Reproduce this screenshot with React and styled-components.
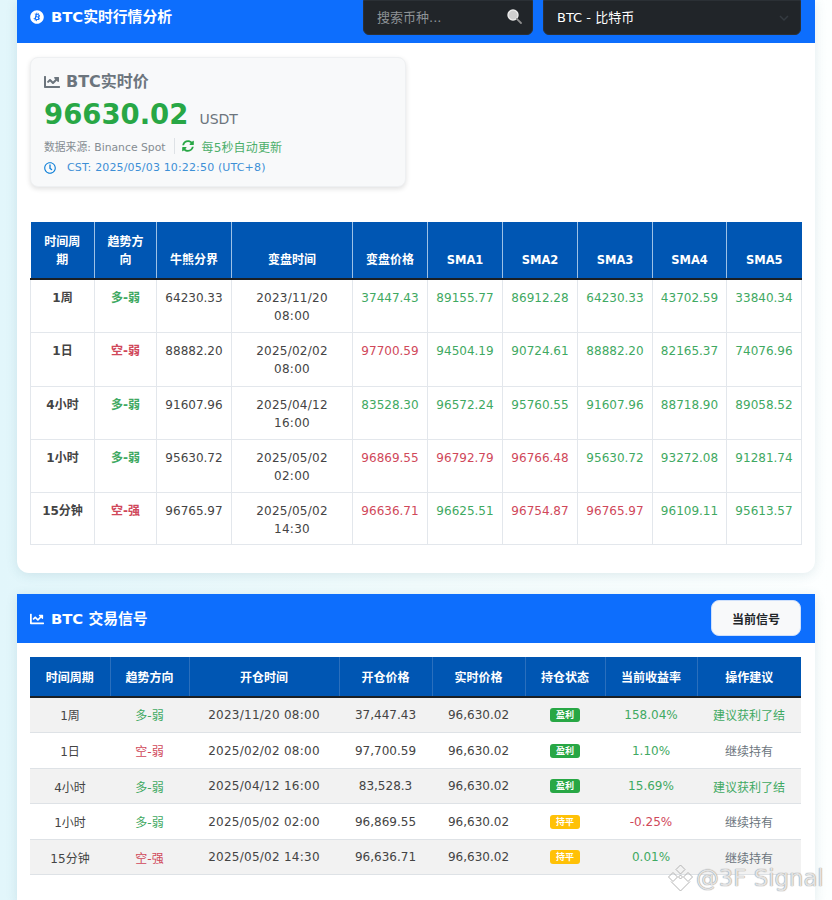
import styled, { createGlobalStyle } from 'styled-components';
import { FaBitcoin, FaChartLine, FaSyncAlt, FaRegClock } from 'react-icons/fa';

const GlobalStyle = createGlobalStyle`
  html, body {
    margin: 0;
    height: 900px;
    overflow: hidden;
    background: linear-gradient(90deg, #e2f6fb 0%, #f1fbfc 50%, #fdffff 100%);
    font-family: "DejaVu Sans", "Noto Sans CJK SC", sans-serif;
    color: #333;
  }
  * { box-sizing: border-box; }
`;

const Page = styled.div`
  position: relative;
  height: 900px;
  overflow: hidden;
  padding: 0 17px;
  display: flex;
  flex-direction: column;
  gap: 21px;
`;

const Card = styled.section`
  background: #fff;
  border-radius: ${p => (p.$open ? '2px 2px 0 0' : '0 0 12px 12px')};
  box-shadow: 0 2px 12px rgba(60, 110, 130, 0.14);
  flex-shrink: 0;
`;

const Header = styled.header`
  background: #0d6efd;
  height: ${p => p.$h}px;
  padding: 0 14px 0 13px;
  display: flex;
  align-items: ${p => (p.$top ? 'flex-start' : 'center')};
  justify-content: space-between;
`;

const Title = styled.h2`
  margin: 0;
  padding-top: ${p => (p.$nudge ? 1 : 0)}px;
  color: #fff;
  font-size: 14.8px;
  font-weight: 700;
  display: flex;
  align-items: center;
  gap: 7px;
  line-height: 34px;
  svg { font-size: 14px; }
`;

const Controls = styled.div`
  display: flex;
  gap: 10px;
`;

const SearchBox = styled.div`
  position: relative;
  width: 170px;
  height: 35px;
`;

const SearchInput = styled.input`
  width: 100%;
  height: 100%;
  border: 1px solid #2b3035;
  border-radius: 0 0 6px 6px;
  background: #212529;
  color: #fff;
  padding: 0 13px;
  font: 13px "DejaVu Sans", "Noto Sans CJK SC", sans-serif;
  &::placeholder { color: #8d9296; opacity: 1; }
`;

const SearchGlyph = styled.svg`
  position: absolute;
  right: 10px;
  top: 8px;
  width: 17px;
  height: 17px;
`;

const SelectBox = styled.div`
  position: relative;
  width: 258px;
  height: 35px;
`;

const CoinSelect = styled.select`
  width: 100%;
  height: 100%;
  appearance: none;
  border: 1px solid #2b3035;
  border-radius: 0 0 6px 6px;
  background: #212529;
  color: #fff;
  padding: 0 13px;
  font: 13px "DejaVu Sans", "Noto Sans CJK SC", sans-serif;
`;

const Chevron = styled.svg`
  position: absolute;
  right: 12px;
  top: 14px;
  width: 10px;
  height: 8px;
`;

const Body = styled.div`
  padding: 14px 13px 28px;
`;

const PriceCard = styled.div`
  width: 376px;
  height: 130px;
  margin-bottom: 35px;
  padding: 14px 13px 0;
  background: #f8f9fa;
  border: 1px solid #eef0f2;
  border-radius: 8px;
  box-shadow: 0 2px 5px rgba(0, 0, 0, 0.12);
`;

const PriceLabel = styled.div`
  display: flex;
  align-items: center;
  gap: 6px;
  color: #6c757d;
  font-size: 16px;
  font-weight: 700;
  line-height: 20px;
`;

const PriceRow = styled.div`
  display: flex;
  align-items: baseline;
  gap: 11px;
  margin-top: 4px;
  line-height: 36px;
`;

const PriceValue = styled.span`
  color: #28a745;
  font-size: 27.5px;
  font-weight: 700;
`;

const PriceUnit = styled.span`
  color: #6c757d;
  font-size: 14px;
`;

const MetaRow = styled.div`
  display: flex;
  align-items: center;
  height: 18px;
  font-size: 10.8px;
  color: #858c92;
`;

const AutoUpdate = styled.span`
  display: flex;
  align-items: center;
  gap: 8px;
  margin-left: 8px;
  padding-left: 7px;
  border-left: 1px solid #dee2e6;
  height: 16px;
  font-size: 12px;
  letter-spacing: 0.15px;
  color: #4caf6a;
  svg { color: #28a745; font-size: 12px; }
`;

const ClockRow = styled.div`
  display: flex;
  align-items: center;
  gap: 11px;
  margin-top: 5px;
  font-size: 11px;
  letter-spacing: 0.15px;
  line-height: 16px;
  color: #3d8fd6;
  svg { color: #0d7fd8; font-size: 12px; }
`;

const Table = styled.table`
  width: 771px;
  border-collapse: collapse;
  table-layout: fixed;
  font-size: 12px;
`;

const Col = styled.col`
  width: ${p => p.$w}px;
`;

const TrendHead = styled.th`
  background: #0056b3;
  color: #fff;
  height: 57px;
  padding: 0 8px 9px;
  font-size: ${p => (p.$latin ? 11.5 : 12)}px;
  line-height: 18px;
  font-weight: 700;
  vertical-align: bottom;
  text-align: center;
  border-left: 1px solid #9dc1e6;
  border-bottom: 2px solid #1a1f24;
  &:first-child { border-left: 0; }
  &:last-child { border-right: 0; }
`;

const TrendCell = styled.td`
  height: ${p => p.$h}px;
  padding: 9px 4px 0;
  line-height: 18px;
  vertical-align: top;
  text-align: center;
  border: 1px solid #e3e7ec;
  color: ${p => (p.$tone === 'up' ? '#3fa962' : p.$tone === 'down' ? '#d0485a' : '#444')};
  font-weight: ${p => (p.$strong ? 700 : 400)};
  letter-spacing: ${p => (p.$date ? '0.25px' : '0')};
`;

const SignalHead = styled.th`
  background: #0056b3;
  color: #fff;
  height: 40px;
  padding: 0;
  font-size: 12px;
  font-weight: 700;
  text-align: center;
  border-left: 1px solid #2a6fbd;
  border-bottom: 2px solid #1a1f24;
  &:first-child { border-left: 0; }
`;

const SignalRow = styled.tr`
  background: ${p => (p.$odd ? '#f2f2f2' : '#fff')};
`;

const SignalCell = styled.td`
  height: ${p => p.$h}px;
  padding: 0;
  text-align: center;
  border-bottom: 1px solid #dee2e6;
  color: ${p => (p.$tone === 'up' ? '#3fa962' : p.$tone === 'down' ? '#d0485a' : p.$tone === 'muted' ? '#6c757d' : '#444')};
  letter-spacing: ${p => (p.$date ? '0.25px' : '0')};
`;

const Badge = styled.span`
  display: inline-block;
  width: 30px;
  height: 14px;
  line-height: 14px;
  border-radius: 3px;
  vertical-align: middle;
  color: #fff;
  font-size: 9px;
  font-weight: 700;
  background: ${p => (p.$flat ? '#ffc107' : '#28a745')};
`;

const SignalButton = styled.button`
  width: 90px;
  height: 36px;
  border: 1px solid #cfe0fb;
  border-radius: 8px;
  background: #f8f9fa;
  color: #212529;
  font: 700 12px "DejaVu Sans", "Noto Sans CJK SC", sans-serif;
`;

const Watermark = styled.div`
  position: absolute;
  left: 667px;
  top: 864px;
  display: flex;
  align-items: center;
  gap: 2px;
  font-size: 22.8px;
  line-height: 28px;
  white-space: nowrap;
  color: rgba(255, 255, 255, 0.75);
  text-shadow: 0 0 1px #8c8c8c, 0 0 1px #a0a0a0;
`;

const trendRows = [
  ['1周', '多-弱', 'up', '64230.33', '2023/11/20', '08:00', ['37447.43', 'up'], '89155.77 up', '86912.28 up', '64230.33 up', '43702.59 up', '33840.34 up'],
  ['1日', '空-弱', 'down', '88882.20', '2025/02/02', '08:00', ['97700.59', 'down'], '94504.19 up', '90724.61 up', '88882.20 up', '82165.37 up', '74076.96 up'],
  ['4小时', '多-弱', 'up', '91607.96', '2025/04/12', '16:00', ['83528.30', 'up'], '96572.24 up', '95760.55 up', '91607.96 up', '88718.90 up', '89058.52 up'],
  ['1小时', '多-弱', 'up', '95630.72', '2025/05/02', '02:00', ['96869.55', 'down'], '96792.79 down', '96766.48 down', '95630.72 up', '93272.08 up', '91281.74 up'],
  ['15分钟', '空-强', 'down', '96765.97', '2025/05/02', '14:30', ['96636.71', 'down'], '96625.51 up', '96754.87 down', '96765.97 down', '96109.11 up', '95613.57 up'],
];

const signalRows = [
  ['1周', '多-弱', 'up', '2023/11/20 08:00', '37,447.43', '盈利', '158.04%', 'up', '建议获利了结', 'up'],
  ['1日', '空-弱', 'down', '2025/02/02 08:00', '97,700.59', '盈利', '1.10%', 'up', '继续持有', 'muted'],
  ['4小时', '多-弱', 'up', '2025/04/12 16:00', '83,528.3', '盈利', '15.69%', 'up', '建议获利了结', 'up'],
  ['1小时', '多-弱', 'up', '2025/05/02 02:00', '96,869.55', '持平', '-0.25%', 'down', '继续持有', 'muted'],
  ['15分钟', '空-强', 'down', '2025/05/02 14:30', '96,636.71', '持平', '0.01%', 'up', '继续持有', 'muted'],
];

const trendCols = [64, 62, 75, 121, 75, 75, 75, 75, 74, 75];
const trendHeads = ['时间周期', '趋势方向', '牛熊分界', '变盘时间', '变盘价格', 'SMA1', 'SMA2', 'SMA3', 'SMA4', 'SMA5'];
const signalCols = [80, 79, 150, 93, 93, 80, 92, 104];
const signalHeads = ['时间周期', '趋势方向', '开仓时间', '开仓价格', '实时价格', '持仓状态', '当前收益率', '操作建议'];
const trendHeights = [53, 54, 53, 53, 52];
const signalHeights = [36, 36, 35, 36, 35];

const App = () => {
  return (
    <Page>
      <GlobalStyle />
      <Card>
        <Header $h={43} $top>
          <Title><FaBitcoin /> BTC实时行情分析</Title>
          <Controls>
            <SearchBox>
              <SearchInput placeholder='搜索币种...' />
              <SearchGlyph viewBox='0 0 17 17'>
                <circle cx='7' cy='7' r='5' fill='#cfcfcf' stroke='#ececec' strokeWidth='1.4' />
                <path d='M10.8 10.8 L15 15' stroke='#8f8f8f' strokeWidth='1.8' strokeLinecap='round' />
              </SearchGlyph>
            </SearchBox>
            <SelectBox>
              <CoinSelect defaultValue='btc'>
                <option value='btc'>BTC - 比特币</option>
              </CoinSelect>
              <Chevron viewBox='0 0 10 8'>
                <path d='M1 2 L5 6 L9 2' fill='none' stroke='#343a40' strokeWidth='1.5' />
              </Chevron>
            </SelectBox>
          </Controls>
        </Header>
        <Body>
          <PriceCard>
            <PriceLabel><FaChartLine /> BTC实时价</PriceLabel>
            <PriceRow>
              <PriceValue>96630.02</PriceValue>
              <PriceUnit>USDT</PriceUnit>
            </PriceRow>
            <MetaRow>
              数据来源: Binance Spot
              <AutoUpdate><FaSyncAlt /> 每5秒自动更新</AutoUpdate>
            </MetaRow>
            <ClockRow><FaRegClock /> CST: 2025/05/03 10:22:50 (UTC+8)</ClockRow>
          </PriceCard>
          <Table>
            <colgroup>{trendCols.map((w, i) => <Col key={i} $w={w} />)}</colgroup>
            <thead>
              <tr>
                {trendHeads.map(h => <TrendHead key={h} $latin={h.startsWith('SMA')}>{h}</TrendHead>)}
              </tr>
            </thead>
            <tbody>
              {trendRows.map((r, i) => (
                <tr key={r[0]}>
                  <TrendCell $h={trendHeights[i]} $strong>{r[0]}</TrendCell>
                  <TrendCell $tone={r[2]} $strong>{r[1]}</TrendCell>
                  <TrendCell>{r[3]}</TrendCell>
                  <TrendCell $date>{r[4]}<br />{r[5]}</TrendCell>
                  <TrendCell $tone={r[6][1]}>{r[6][0]}</TrendCell>
                  {r.slice(7).map((v, j) => {
                    const [value, tone] = v.split(' ');
                    return <TrendCell key={j} $tone={tone}>{value}</TrendCell>;
                  })}
                </tr>
              ))}
            </tbody>
          </Table>
        </Body>
      </Card>
      <Card $open>
        <Header $h={49}>
          <Title $nudge><FaChartLine /> BTC 交易信号</Title>
          <SignalButton>当前信号</SignalButton>
        </Header>
        <Body>
          <Table>
            <colgroup>{signalCols.map((w, i) => <Col key={i} $w={w} />)}</colgroup>
            <thead>
              <tr>
                {signalHeads.map(h => <SignalHead key={h}>{h}</SignalHead>)}
              </tr>
            </thead>
            <tbody>
              {signalRows.map((r, i) => (
                <SignalRow key={r[0]} $odd={i % 2 === 0}>
                  <SignalCell $h={signalHeights[i]}>{r[0]}</SignalCell>
                  <SignalCell $tone={r[2]}>{r[1]}</SignalCell>
                  <SignalCell $date>{r[3]}</SignalCell>
                  <SignalCell>{r[4]}</SignalCell>
                  <SignalCell>96,630.02</SignalCell>
                  <SignalCell><Badge $flat={r[5] === '持平'}>{r[5]}</Badge></SignalCell>
                  <SignalCell $tone={r[7]}>{r[6]}</SignalCell>
                  <SignalCell $tone={r[9]}>{r[8]}</SignalCell>
                </SignalRow>
              ))}
            </tbody>
          </Table>
        </Body>
      </Card>
      <Watermark>
        <svg width='27' height='28' viewBox='0 0 27 28' fill='none' stroke='#b4b4b4' strokeWidth='1'>
          <path d='M13.5 1 L18 5.5 L13.5 10 L9 5.5 Z' />
          <path d='M6 8.5 L10.5 13 L6 17.5 L1.5 13 Z' />
          <path d='M21 8.5 L25.5 13 L21 17.5 L16.5 13 Z' />
          <path d='M13.5 27 L4 17.5 M13.5 27 L23 17.5' />
          <path d='M13.5 11 L15.5 13 L13.5 15 L11.5 13 Z' />
        </svg>
        @3F Signal
      </Watermark>
    </Page>
  );
};

export default App;
